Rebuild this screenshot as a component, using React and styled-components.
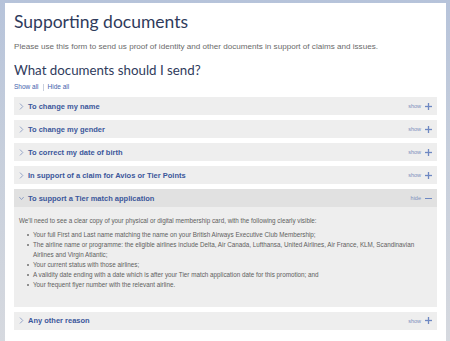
import React, { useState } from 'react';
import styled, { createGlobalStyle } from 'styled-components';

const GlobalStyle = createGlobalStyle`
  html, body {
    margin: 0;
    padding: 0;
  }
  body {
    background: linear-gradient(180deg, #b6c3da 0%, #c7cfdc 45%, #d6d9df 100%);
    font-family: "Liberation Sans", Arial, sans-serif;
    height: 341px;
    overflow: hidden;
  }
`;

const Page = styled.div`
  padding: 3px 4px 0 5px;
`;

const Panel = styled.main`
  box-sizing: border-box;
  background: #ffffff;
  padding: 8px 9px 20px 9px;
  min-height: 338px;
`;

const Title = styled.h1`
  font-family: Lato, "Open Sans", sans-serif;
  font-weight: 400;
  font-size: 17.5px;
  line-height: 22px;
  color: #2f3b5c;
  margin: 0;
`;

const Intro = styled.p`
  font-size: 8.1px;
  line-height: 12px;
  color: #6a6a6a;
  margin: 8px 0 0;
`;

const Subtitle = styled.h2`
  font-family: Lato, "Open Sans", sans-serif;
  font-weight: 400;
  font-size: 13.3px;
  line-height: 18px;
  color: #2f3b5c;
  margin: 8px 0 0;
`;

const Toggles = styled.div`
  display: flex;
  align-items: center;
  gap: 4px;
  font-size: 6.5px;
  line-height: 10px;
  margin: 3px 0 5px;
`;

const ToggleLink = styled.a`
  color: #3f63ad;
  text-decoration: none;
  cursor: pointer;
`;

const Divider = styled.span`
  width: 1px;
  height: 7px;
  background: #c9cfdc;
`;

const List = styled.div`
  display: flex;
  flex-direction: column;
  gap: 5px;
`;

const Item = styled.section`
  display: flex;
  flex-direction: column;
`;

const Header = styled.div`
  display: flex;
  align-items: center;
  height: 18px;
  padding: 0 5px 0 5px;
  background: ${(p) => (p.$open ? '#e1e1e1' : '#eeeeee')};
  cursor: pointer;
`;

const Chevron = styled.svg`
  width: 5px;
  height: 7px;
  margin-right: 4px;
  flex: none;
`;

const Label = styled.span`
  flex: 1;
  font-size: 7.5px;
  font-weight: 700;
  color: #3b579b;
`;

const Action = styled.span`
  font-size: 5.5px;
  color: #7c8fbc;
  margin-right: 4px;
`;

const Sign = styled.svg`
  width: 7px;
  height: 7px;
  flex: none;
`;

const Body = styled.div`
  background: #eeeeee;
  padding: 9px 5px 17px 5px;
  font-size: 6.3px;
  line-height: 9.5px;
  color: #606060;
`;

const Lead = styled.p`
  margin: 0 0 4.5px;
`;

const Bullets = styled.ul`
  margin: 0;
  padding: 0 0 0 14px;
  list-style: none;
`;

const Bullet = styled.li`
  position: relative;
  margin-bottom: 0.6px;
  &::before {
    content: '';
    position: absolute;
    left: -6px;
    top: 4px;
    width: 2px;
    height: 2px;
    border-radius: 50%;
    background: #707070;
  }
`;

const sections = [
  { title: 'To change my name' },
  { title: 'To change my gender' },
  { title: 'To correct my date of birth' },
  { title: 'In support of a claim for Avios or Tier Points' },
  {
    title: 'To support a Tier match application',
    lead:
      "We'll need to see a clear copy of your physical or digital membership card, with the following clearly visible:",
    bullets: [
      'Your full First and Last name matching the name on your British Airways Executive Club Membership;',
      'The airline name or programme: the eligible airlines include Delta, Air Canada, Lufthansa, United Airlines, Air France, KLM, Scandinavian Airlines and Virgin Atlantic;',
      'Your current status with those airlines;',
      'A validity date ending with a date which is after your Tier match application date for this promotion; and',
      'Your frequent flyer number with the relevant airline.',
    ],
  },
  { title: 'Any other reason' },
];

const ChevronIcon = ({ open }) => (
  <Chevron viewBox="0 0 5 7">
    {open ? (
      <polyline points="0.3,2 2.5,4.6 4.7,2" fill="none" stroke="#8b9cc3" strokeWidth="0.9" />
    ) : (
      <polyline points="1,0.6 3.8,3.5 1,6.4" fill="none" stroke="#8b9cc3" strokeWidth="0.9" />
    )}
  </Chevron>
);

const SignIcon = ({ open }) => (
  <Sign viewBox="0 0 7 7">
    <line x1="0" y1="3.5" x2="7" y2="3.5" stroke="#6e88c2" strokeWidth={open ? 1 : 1.3} />
    {!open && <line x1="3.5" y1="0" x2="3.5" y2="7" stroke="#6e88c2" strokeWidth="1.3" />}
  </Sign>
);

const App = () => {
  const [open, setOpen] = useState([4]);

  const toggle = (i) => {
    if (open.includes(i)) {
      setOpen(open.filter((x) => x !== i));
    } else {
      setOpen([...open, i]);
    }
  };

  return (
    <>
      <GlobalStyle />
      <Page>
        <Panel>
          <Title>Supporting documents</Title>
          <Intro>
            Please use this form to send us proof of identity and other documents in support of claims and issues.
          </Intro>
          <Subtitle>What documents should I send?</Subtitle>
          <Toggles>
            <ToggleLink onClick={() => setOpen([4])}>Show all</ToggleLink>
            <Divider />
            <ToggleLink onClick={() => setOpen([])}>Hide all</ToggleLink>
          </Toggles>
          <List>
            {sections.map((s, i) => {
              const isOpen = open.includes(i) && Boolean(s.lead);
              return (
                <Item key={s.title}>
                  <Header $open={isOpen} onClick={() => toggle(i)}>
                    <ChevronIcon open={isOpen} />
                    <Label>{s.title}</Label>
                    <Action>{isOpen ? 'hide' : 'show'}</Action>
                    <SignIcon open={isOpen} />
                  </Header>
                  {isOpen && (
                    <Body>
                      <Lead>{s.lead}</Lead>
                      <Bullets>
                        {s.bullets.map((b) => (
                          <Bullet key={b}>{b}</Bullet>
                        ))}
                      </Bullets>
                    </Body>
                  )}
                </Item>
              );
            })}
          </List>
        </Panel>
      </Page>
    </>
  );
};

export default App;
